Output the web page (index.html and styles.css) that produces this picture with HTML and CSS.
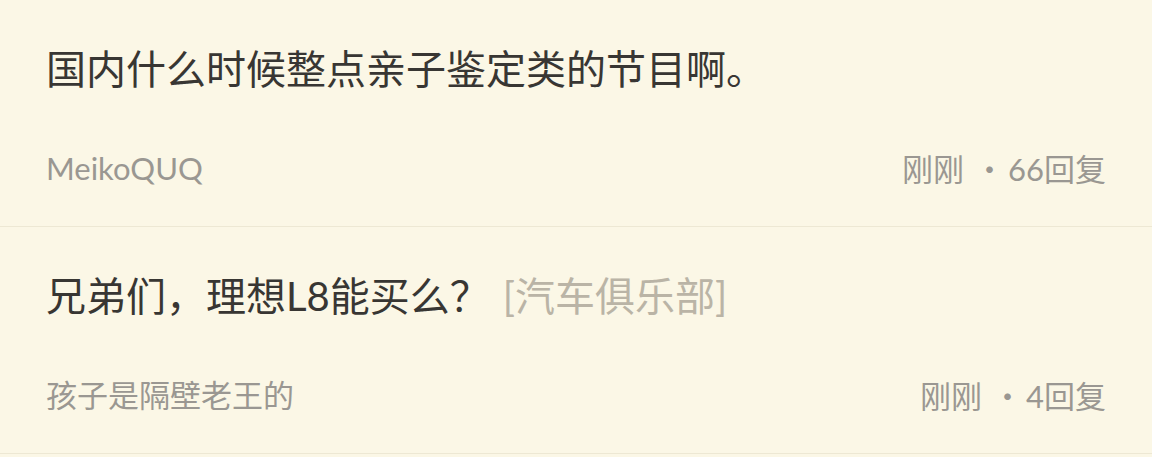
FILE: index.html
```html
<!DOCTYPE html>
<html lang="zh-CN">
<head>
    <meta charset="UTF-8">
    <meta name="viewport" content="width=device-width, initial-scale=1.0">
    <title>帖子列表</title>
    <link rel="stylesheet" href="styles.css">
</head>
<body>

<ul class="post-list">
    <li class="post">
        <p class="post-title">国内什么时候整点亲子鉴定类的节目啊。</p>
        <div class="post-meta">
            <span class="author">MeikoQUQ</span>
            <span class="info">刚刚<span class="dot">·</span>66回复</span>
        </div>
    </li>
    <li class="post">
        <p class="post-title">兄弟们，理想L8能买么？<span class="tag">[汽车俱乐部]</span></p>
        <div class="post-meta">
            <span class="author">孩子是隔壁老王的</span>
            <span class="info">刚刚<span class="dot">·</span>4回复</span>
        </div>
    </li>
</ul>

</body>
</html>
```

FILE: styles.css
```css
/* Reset dan dasar */
* {
    margin: 0;
    padding: 0;
    box-sizing: border-box;
}

body {
    font-family: Lato, "Noto Sans CJK SC", sans-serif;
    background-color: #fbf7e6;
    color: #333;
}

.post-list {
    list-style: none;
}

.post {
    height: 227px;
    padding: 42px 46px 0 46px;
    border-bottom: 1px solid #ede8d4;
}

.post-title {
    font-size: 40px;
    line-height: 55px;
    color: #383633;
}

.post-title .tag {
    margin-left: 13px;
    color: #bab4a6;
}

.post-meta {
    display: flex;
    justify-content: space-between;
    margin-top: 50px;
    font-size: 31px;
    line-height: 42px;
    color: #9a9792;
}

.post-meta .dot {
    margin: 0 3px 0 10px;
    font-family: "Noto Sans CJK SC", sans-serif;
}
```
